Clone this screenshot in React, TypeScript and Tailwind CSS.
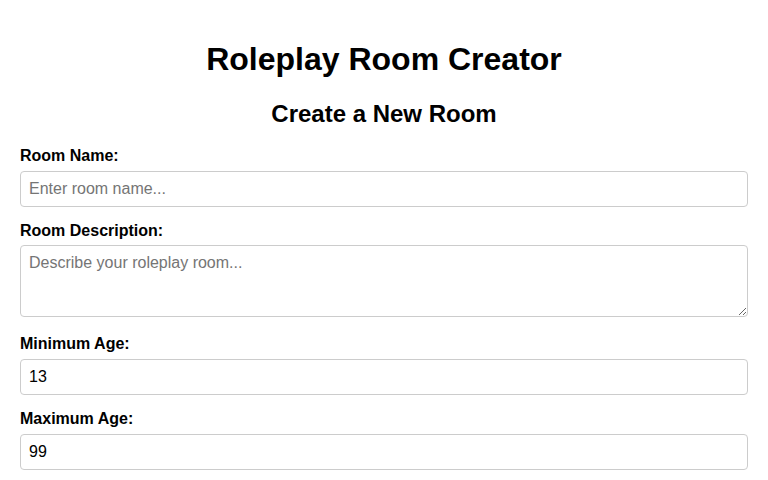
export default function App() {
  return (
    <div className="min-h-screen bg-white p-5 text-black font-['Liberation_Sans',Arial,sans-serif]">
      <h1 className="mt-[21.44px] text-center text-[32px] font-bold leading-[1.15]">Roleplay Room Creator</h1>
      <h2 className="mt-[21.44px] mb-[19.92px] text-center text-[24px] font-bold leading-[1.15]">Create a New Room</h2>
      <form className="flex flex-col">
        <div className="mb-[15px]">
          <label className="mb-[5px] block text-[16px] font-bold leading-[1.15]">Room Name:</label>
          <input
            type="text"
            placeholder="Enter room name..."
            className="block w-full rounded-[4px] border border-[#cccccc] p-2 text-[16px] leading-[1.15] placeholder:text-[#757575]"
          />
        </div>
        <div className="mb-[18px]">
          <label className="mb-[5px] block text-[16px] font-bold leading-[1.15]">Room Description:</label>
          <textarea
            placeholder="Describe your roleplay room..."
            className="block h-[72px] w-full rounded-[4px] border border-[#cccccc] p-2 text-[16px] leading-[1.15] placeholder:text-[#757575]"
          />
        </div>
        <div className="mb-[15px]">
          <label className="mb-[5px] block text-[16px] font-bold leading-[1.15]">Minimum Age:</label>
          <input
            type="number"
            defaultValue={13}
            className="block w-full rounded-[4px] border border-[#cccccc] p-2 text-[16px] leading-[1.15]"
          />
        </div>
        <div className="mb-[15px]">
          <label className="mb-[5px] block text-[16px] font-bold leading-[1.15]">Maximum Age:</label>
          <input
            type="number"
            defaultValue={99}
            className="block w-full rounded-[4px] border border-[#cccccc] p-2 text-[16px] leading-[1.15]"
          />
        </div>
      </form>
    </div>
  );
}
